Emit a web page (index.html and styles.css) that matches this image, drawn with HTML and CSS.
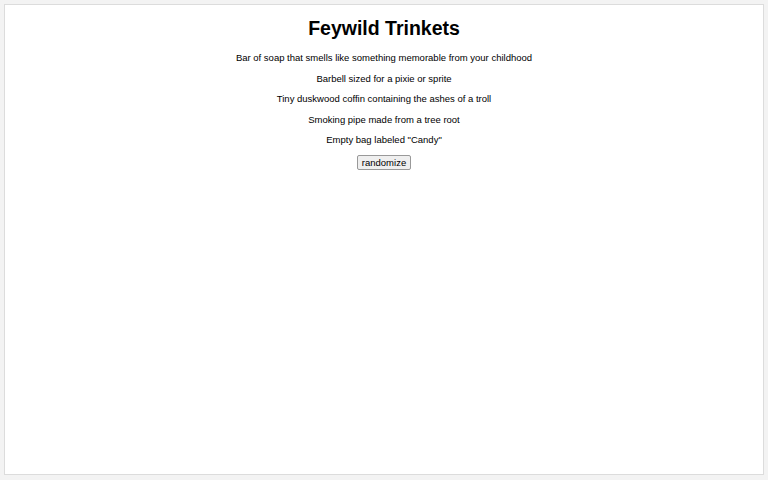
FILE: index.html
```html
<!DOCTYPE html>
<html lang="en">
<head>
  <meta charset="UTF-8" />
  <title>Feywild Trinkets</title>
  <link rel="stylesheet" href="styles.css">
</head>
<body>

  <div class="sheet">
    <h1>Feywild Trinkets</h1>
    <div id="trinkets">
      <p>Bar of soap that smells like something memorable from your childhood</p>
      <p>Barbell sized for a pixie or sprite</p>
      <p>Tiny duskwood coffin containing the ashes of a troll</p>
      <p>Smoking pipe made from a tree root</p>
      <p>Empty bag labeled "Candy"</p>
    </div>
    <button type="button">randomize</button>
  </div>

</body>
</html>
```

FILE: styles.css
```css
body {
  font-family: "Liberation Sans", Arial, sans-serif;
  margin: 4px;
  background-color: #f3f3f3;
}

.sheet {
  background: white;
  border: 1px solid #dcdcdc;
  height: 471px;
  box-sizing: border-box;
  text-align: center;
  padding-top: 1px;
}

h1 {
  font-size: 19.5px;
  margin: 11px 0 12px;
}

#trinkets p {
  font-size: 9.5px;
  line-height: 12px;
  margin: 8.5px 0;
}

#trinkets p:last-child {
  margin-bottom: 5.5px;
}

button {
  font-family: "Liberation Sans", Arial, sans-serif;
  font-size: 9.5px;
  padding: 1px 4px;
  background: #efefef;
  border: 1px solid #999;
  border-radius: 2px;
  color: black;
}
```
